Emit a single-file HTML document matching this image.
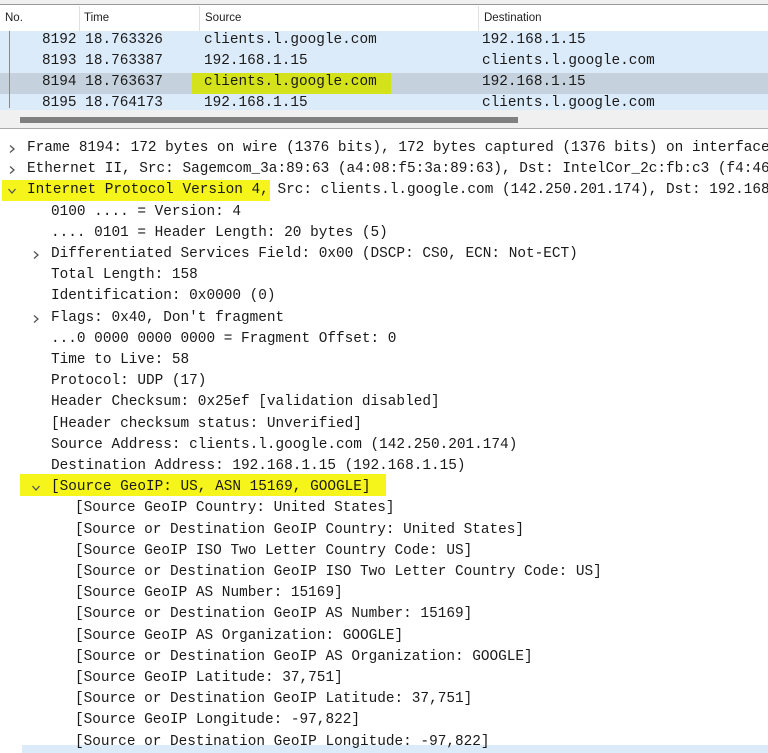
<!DOCTYPE html>
<html><head><meta charset="utf-8"><style>
*{margin:0;padding:0;box-sizing:border-box}
body{width:768px;height:753px;overflow:hidden;background:#fff;position:relative;font-family:"Liberation Mono",monospace;color:#1a1a1a}
.a{position:absolute;white-space:pre}
.hdr{position:absolute;top:6px;left:0;width:768px;height:25px;background:#fff;font-family:"Liberation Sans",sans-serif;font-size:11.5px;color:#222}
.hdr span{position:absolute;top:6px}
.sep{position:absolute;top:6px;width:1px;height:25px;background:#e0e0e0}
.row{position:absolute;left:0;width:768px;height:21px;background:#dcebf9;font-size:14.4px}
.row span{position:absolute;top:1px}
.d{position:absolute;font-size:14.4px;white-space:pre;height:21px;line-height:21px}
.ar{position:absolute;width:10px;height:10px}
</style></head><body>
<div class="a" style="left:0;top:0;width:768px;height:5px;background:#f0f0f0;border-bottom:1px solid #999"></div>
<div class="hdr"><span style="left:5px">No.</span><span style="left:84px">Time</span><span style="left:205px">Source</span><span style="left:484px">Destination</span></div>
<div class="sep" style="left:79px"></div><div class="sep" style="left:199px"></div><div class="sep" style="left:478px"></div>
<div class="row" style="top:31px"><span style="left:42px">8192 18.763326</span><span style="left:204px">clients.l.google.com</span><span style="left:482px">192.168.1.15</span></div>
<div class="row" style="top:52px"><span style="left:42px">8193 18.763387</span><span style="left:204px">192.168.1.15</span><span style="left:482px">clients.l.google.com</span></div>
<div class="row" style="top:73px;background:#c5d2dd"><div class="a" style="left:192px;top:0;width:199px;height:21px;background:#d4e21c"></div><span style="left:42px">8194 18.763637</span><span style="left:204px">clients.l.google.com</span><span style="left:482px">192.168.1.15</span></div>
<div class="row" style="top:94px;height:16px;overflow:hidden"><span style="left:42px">8195 18.764173</span><span style="left:204px">192.168.1.15</span><span style="left:482px">clients.l.google.com</span></div>
<div class="a" style="left:9px;top:31px;width:1px;height:77px;background:#888"></div>
<div class="a" style="left:0;top:110px;width:768px;height:19px;background:#f0f0f0;border-bottom:1px solid #aaa"></div>
<div class="a" style="left:20px;top:117px;width:498px;height:6px;background:#808080"></div>
<div class="a" style="left:2px;top:180px;width:268px;height:21px;background:#f5f51c"></div>
<div class="a" style="left:20px;top:474px;width:366px;height:22px;background:#f5f51c"></div>
<div class="a" style="left:22px;top:745px;width:746px;height:8px;background:#dcebf9"></div>
<div id="det"></div>
<script>
var L=[
[0,'>','Frame 8194: 172 bytes on wire (1376 bits), 172 bytes captured (1376 bits) on interface'],
[0,'>','Ethernet II, Src: Sagemcom_3a:89:63 (a4:08:f5:3a:89:63), Dst: IntelCor_2c:fb:c3 (f4:46'],
[0,'v','Internet Protocol Version 4, Src: clients.l.google.com (142.250.201.174), Dst: 192.168'],
[1,'','0100 .... = Version: 4'],
[1,'','.... 0101 = Header Length: 20 bytes (5)'],
[1,'>','Differentiated Services Field: 0x00 (DSCP: CS0, ECN: Not-ECT)'],
[1,'','Total Length: 158'],
[1,'','Identification: 0x0000 (0)'],
[1,'>','Flags: 0x40, Don\'t fragment'],
[1,'','...0 0000 0000 0000 = Fragment Offset: 0'],
[1,'','Time to Live: 58'],
[1,'','Protocol: UDP (17)'],
[1,'','Header Checksum: 0x25ef [validation disabled]'],
[1,'','[Header checksum status: Unverified]'],
[1,'','Source Address: clients.l.google.com (142.250.201.174)'],
[1,'','Destination Address: 192.168.1.15 (192.168.1.15)'],
[1,'v','[Source GeoIP: US, ASN 15169, GOOGLE]'],
[2,'','[Source GeoIP Country: United States]'],
[2,'','[Source or Destination GeoIP Country: United States]'],
[2,'','[Source GeoIP ISO Two Letter Country Code: US]'],
[2,'','[Source or Destination GeoIP ISO Two Letter Country Code: US]'],
[2,'','[Source GeoIP AS Number: 15169]'],
[2,'','[Source or Destination GeoIP AS Number: 15169]'],
[2,'','[Source GeoIP AS Organization: GOOGLE]'],
[2,'','[Source or Destination GeoIP AS Organization: GOOGLE]'],
[2,'','[Source GeoIP Latitude: 37,751]'],
[2,'','[Source or Destination GeoIP Latitude: 37,751]'],
[2,'','[Source GeoIP Longitude: -97,822]'],
[2,'','[Source or Destination GeoIP Longitude: -97,822]']];
var h='';
L.forEach(function(l,i){var y=138+i*21.2;var x=[27,51,75][l[0]];
if(l[1]){var p=l[1]=='>'?'M3 1.5 L7 5 L3 8.5':'M1.5 3 L5 7 L8.5 3';
h+='<svg class="ar" style="left:'+(x-20)+'px;top:'+(y+6)+'px" viewBox="0 0 10 10"><path d="'+p+'" fill="none" stroke="#555" stroke-width="1.3"/></svg>';}
h+='<div class="d" style="left:'+x+'px;top:'+y+'px">'+l[2].replace(/&/g,'&amp;').replace(/</g,'&lt;')+'</div>';});
document.getElementById('det').innerHTML=h;
</script>
</body></html>
